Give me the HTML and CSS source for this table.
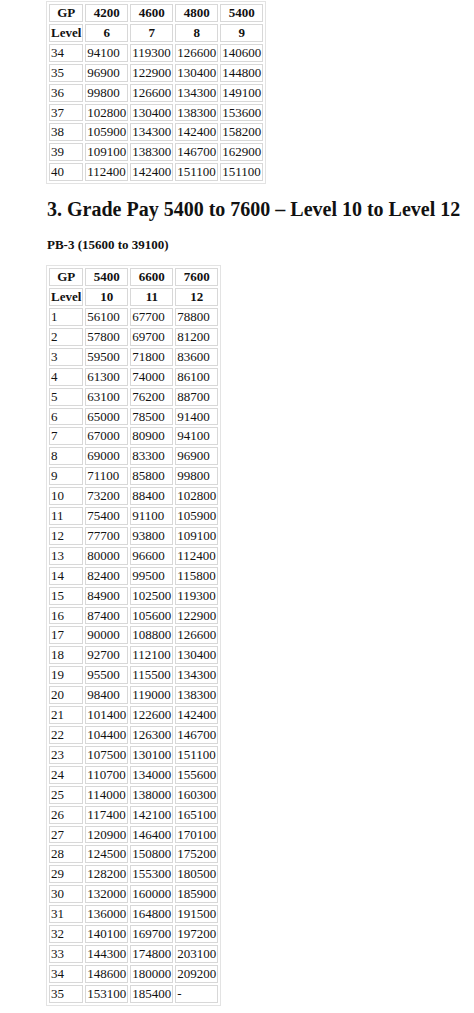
FILE: index.html
```html
<!DOCTYPE html>
<html>
<head>
<meta charset="utf-8">
<link rel="stylesheet" href="styles.css">
</head>
<body>
<div class="page">
<table class="pay">
<tr><th>GP</th><th>4200</th><th>4600</th><th>4800</th><th>5400</th></tr>
<tr><th>Level</th><th>6</th><th>7</th><th>8</th><th>9</th></tr>
<tr><td>34</td><td>94100</td><td>119300</td><td>126600</td><td>140600</td></tr>
<tr><td>35</td><td>96900</td><td>122900</td><td>130400</td><td>144800</td></tr>
<tr><td>36</td><td>99800</td><td>126600</td><td>134300</td><td>149100</td></tr>
<tr><td>37</td><td>102800</td><td>130400</td><td>138300</td><td>153600</td></tr>
<tr><td>38</td><td>105900</td><td>134300</td><td>142400</td><td>158200</td></tr>
<tr><td>39</td><td>109100</td><td>138300</td><td>146700</td><td>162900</td></tr>
<tr><td>40</td><td>112400</td><td>142400</td><td>151100</td><td>151100</td></tr>
</table>
<h3 class="heading">3. Grade Pay 5400 to 7600 – Level 10 to Level 12</h3>
<p class="band"><strong>PB-3 (15600 to 39100)</strong></p>
<table class="pay">
<tr><th>GP</th><th>5400</th><th>6600</th><th>7600</th></tr>
<tr><th>Level</th><th>10</th><th>11</th><th>12</th></tr>
<tr><td>1</td><td>56100</td><td>67700</td><td>78800</td></tr>
<tr><td>2</td><td>57800</td><td>69700</td><td>81200</td></tr>
<tr><td>3</td><td>59500</td><td>71800</td><td>83600</td></tr>
<tr><td>4</td><td>61300</td><td>74000</td><td>86100</td></tr>
<tr><td>5</td><td>63100</td><td>76200</td><td>88700</td></tr>
<tr><td>6</td><td>65000</td><td>78500</td><td>91400</td></tr>
<tr><td>7</td><td>67000</td><td>80900</td><td>94100</td></tr>
<tr><td>8</td><td>69000</td><td>83300</td><td>96900</td></tr>
<tr><td>9</td><td>71100</td><td>85800</td><td>99800</td></tr>
<tr><td>10</td><td>73200</td><td>88400</td><td>102800</td></tr>
<tr><td>11</td><td>75400</td><td>91100</td><td>105900</td></tr>
<tr><td>12</td><td>77700</td><td>93800</td><td>109100</td></tr>
<tr><td>13</td><td>80000</td><td>96600</td><td>112400</td></tr>
<tr><td>14</td><td>82400</td><td>99500</td><td>115800</td></tr>
<tr><td>15</td><td>84900</td><td>102500</td><td>119300</td></tr>
<tr><td>16</td><td>87400</td><td>105600</td><td>122900</td></tr>
<tr><td>17</td><td>90000</td><td>108800</td><td>126600</td></tr>
<tr><td>18</td><td>92700</td><td>112100</td><td>130400</td></tr>
<tr><td>19</td><td>95500</td><td>115500</td><td>134300</td></tr>
<tr><td>20</td><td>98400</td><td>119000</td><td>138300</td></tr>
<tr><td>21</td><td>101400</td><td>122600</td><td>142400</td></tr>
<tr><td>22</td><td>104400</td><td>126300</td><td>146700</td></tr>
<tr><td>23</td><td>107500</td><td>130100</td><td>151100</td></tr>
<tr><td>24</td><td>110700</td><td>134000</td><td>155600</td></tr>
<tr><td>25</td><td>114000</td><td>138000</td><td>160300</td></tr>
<tr><td>26</td><td>117400</td><td>142100</td><td>165100</td></tr>
<tr><td>27</td><td>120900</td><td>146400</td><td>170100</td></tr>
<tr><td>28</td><td>124500</td><td>150800</td><td>175200</td></tr>
<tr><td>29</td><td>128200</td><td>155300</td><td>180500</td></tr>
<tr><td>30</td><td>132000</td><td>160000</td><td>185900</td></tr>
<tr><td>31</td><td>136000</td><td>164800</td><td>191500</td></tr>
<tr><td>32</td><td>140100</td><td>169700</td><td>197200</td></tr>
<tr><td>33</td><td>144300</td><td>174800</td><td>203100</td></tr>
<tr><td>34</td><td>148600</td><td>180000</td><td>209200</td></tr>
<tr><td>35</td><td>153100</td><td>185400</td><td>-</td></tr>
</table>
</div>
</body>
</html>
```
FILE: styles.css
```css
html, body {
  margin: 0;
  padding: 0;
  background: #ffffff;
}
.page {
  padding: 1px 0 0 46px;
  font-family: "Liberation Serif", "Times New Roman", serif;
  font-size: 13px;
  color: #111111;
}
.pay {
  border: 1px solid #e3e3e3;
  border-spacing: 2px;
  border-collapse: separate;
}
.pay th,
.pay td {
  border: 1px solid #d8d8d8;
  padding: 1px;
  line-height: 13.9px;
  font-size: 13px;
}
.pay th {
  font-weight: bold;
  text-align: center;
}
.pay td {
  text-align: left;
  font-weight: normal;
}
.heading {
  margin: 14px 0 0 1px;
  font-size: 20px;
  line-height: 23px;
  font-weight: bold;
  color: #111111;
}
.band {
  margin: 16px 0 13px 1px;
  line-height: 15px;
  font-size: 13px;
}
```
